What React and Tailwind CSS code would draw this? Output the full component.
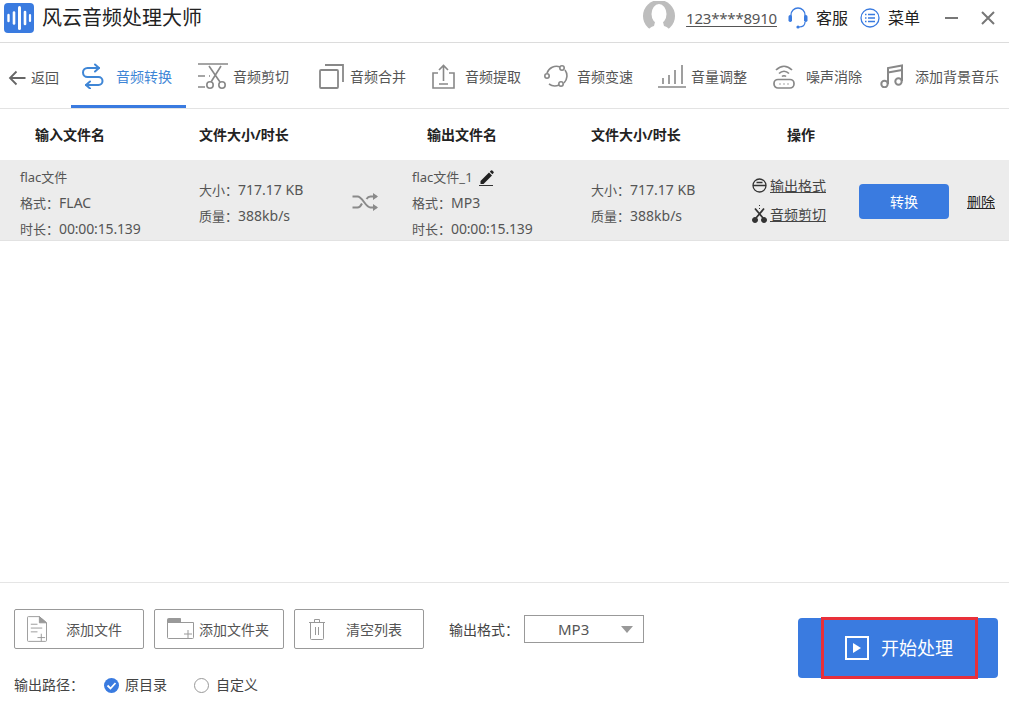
const font = { fontFamily: '"Noto Sans", "Noto Sans CJK SC", sans-serif' };

const Logo = () => (
  <svg width="30" height="30" viewBox="0 0 30 30">
    <rect width="30" height="30" rx="4" fill="#3a7be0" />
    <g stroke="#fff" strokeLinecap="round" fill="none">
      <path d="M4.500 12v6" strokeWidth="2.400" />
      <path d="M10 9.500v11" strokeWidth="2.600" />
      <path d="M15.500 4.500v21" strokeWidth="3" />
      <path d="M21 9v12" strokeWidth="2.600" />
      <path d="M26 12v6" strokeWidth="2.200" />
    </g>
  </svg>
);

const Back = () => (
  <svg width="18" height="16" viewBox="0 0 18 16" fill="none" stroke="#666" strokeWidth="1.800">
    <path d="M17.500 8H2M8.500 1.500 2 8l6.500 6.500" />
  </svg>
);

const ConvertIcon = () => (
  <svg width="24" height="26" viewBox="0 0 24 26" fill="none" stroke="#3f86d6" strokeWidth="2" strokeLinecap="round" strokeLinejoin="round">
    <path d="M14 1.500l4 3.500-4 3.500" />
    <path d="M18 5H6.500a4.500 4.500 0 0 0 0 9H17.500a4 4 0 0 1 0 8H5" />
    <path d="M9 18.500 5 22l4 3.500" />
  </svg>
);

const CutIcon = () => (
  <svg width="30" height="26" viewBox="0 0 30 26" fill="none" stroke="#888" strokeWidth="1.600">
    <path d="M0 1h30M0 13h7M0 24h7M11 13h1" />
    <path d="M11 3l11 16M23 3 13 19" />
    <circle cx="12" cy="22" r="3.200" />
    <circle cx="24" cy="22" r="3.200" />
  </svg>
);

const MergeIcon = () => (
  <svg width="25" height="25" viewBox="0 0 25 25" fill="none" stroke="#888" strokeWidth="1.800">
    <rect x="1" y="6" width="18" height="18" rx="1" />
    <path d="M6 1h18v17" />
  </svg>
);

const ExtractIcon = () => (
  <svg width="23" height="25" viewBox="0 0 23 25" fill="none" stroke="#888" strokeWidth="1.600">
    <path d="M6 9H1v15h21V9h-5" />
    <path d="M11.500 17V2M7 6l4.500-4.500L16 6M7 20h9" />
  </svg>
);

const SpeedIcon = () => (
  <svg width="24" height="24" viewBox="0 0 24 24" fill="none" stroke="#888" strokeWidth="1.600">
    <path d="M3 9a10 10 0 0 1 13-6M21 6a10 10 0 0 1-1 13M15 21a10 10 0 0 1-10-1" />
    <circle cx="18" cy="4" r="2.200" />
    <circle cx="3" cy="12" r="2.200" />
    <circle cx="17" cy="20" r="2.200" />
  </svg>
);

const VolumeIcon = () => (
  <svg width="28" height="24" viewBox="0 0 28 24" fill="none" stroke="#888" strokeWidth="1.600">
    <path d="M0 23h28M5 20v-6M11 20v-9M17 20V6M24 20V1" />
  </svg>
);

const NoiseIcon = () => (
  <svg width="22" height="25" viewBox="0 0 22 25" fill="none" stroke="#888" strokeWidth="1.700">
    <path d="M3 6c5-5 11-5 16 0M6 9.500c3-3 7-3 10 0M9 12.500c1-1 3-1 4 0" />
    <rect x="1" y="15.500" width="20" height="8.500" rx="4" />
    <path d="M6.500 20h1M10.500 20h1M14.500 20h1" />
  </svg>
);

const MusicIcon = () => (
  <svg width="24" height="24" viewBox="0 0 24 24" fill="none" stroke="#888" strokeWidth="2">
    <path d="M8 20V4l14-2.500V17M8 8.500l14-2.500" />
    <circle cx="4.500" cy="20" r="3.200" />
    <circle cx="18.500" cy="17.500" r="3.200" />
  </svg>
);

const Avatar = () => (
  <svg width="32" height="29" viewBox="0 0 32 29">
    <circle cx="16" cy="15" r="16" fill="#bdbdbd" />
    <ellipse cx="16" cy="13" rx="7.500" ry="10" fill="#fff" />
    <path d="M12 21h8l1 4c2 .5 4 1.500 6 4H5c2-2.500 4-3.500 6-4z" fill="#fff" />
  </svg>
);

const Headset = () => (
  <svg width="20" height="22" viewBox="0 0 20 22" fill="none">
    <path d="M3 10V8a7 7 0 0 1 14 0v2" stroke="#3a7be0" strokeWidth="1.300" />
    <rect x="0.500" y="8" width="3.500" height="7" rx="1.700" fill="#3a7be0" />
    <rect x="16" y="8" width="3.500" height="7" rx="1.700" fill="#3a7be0" />
    <path d="M17 15c0 3-2 5-6 5" stroke="#3a7be0" strokeWidth="1.200" />
    <circle cx="10" cy="20" r="1.600" fill="#3a7be0" />
  </svg>
);

const MenuIcon = () => (
  <svg width="20" height="20" viewBox="0 0 20 20" fill="none" stroke="#3a7be0">
    <circle cx="10" cy="10" r="9" strokeWidth="1.300" />
    <path d="M8 6.500h7M8 10h7M8 13.500h7M5 6.500h1.500M5 10h1.500M5 13.500h1.500" strokeWidth="1.300" />
  </svg>
);

const Shuffle = () => (
  <svg width="28" height="18" viewBox="0 0 27 18" fill="none" stroke="#8a8a8a" strokeWidth="2">
    <path d="M0 3.500h5c5 0 8 11 13 11h6M0 14.500h5c2 0 3.500-2 4.500-4M14 6c1-1.500 2.500-2.500 4-2.500h6" />
    <path d="M20.500 0l5 3.500-5 3.500zM20.500 11l5 3.500-5 3.500z" fill="#8a8a8a" stroke="none" />
  </svg>
);

const Pencil = () => (
  <svg width="15" height="16" viewBox="0 0 15 16">
    <path d="M1.500 11 10 2.500l3 3L4.500 14H1.500z" fill="#222" />
    <path d="M10.800 1.700 12 .5a1 1 0 0 1 1.300 0l1.200 1.300a1 1 0 0 1 0 1.300l-1.200 1.200z" fill="#222" />
    <path d="M0 15.500h14" stroke="#333" />
  </svg>
);

const FormatIcon = () => (
  <svg width="15" height="15" viewBox="0 0 15 15" fill="none" stroke="#333" strokeWidth="1.300">
    <circle cx="7.500" cy="7.500" r="6.500" />
    <path d="M1 7.500h13M4.500 4.500h6" />
  </svg>
);

const ScissorIcon = () => (
  <svg width="15" height="18" viewBox="0 0 15 18" fill="none" stroke="#333">
    <path d="M7.500 0v1M7.500 3v1" strokeWidth="1" />
    <path d="M3 3.500 11 13M12 3.500 4 13" strokeWidth="1.800" />
    <circle cx="3" cy="15" r="2.500" fill="#333" />
    <circle cx="12" cy="15" r="2.500" fill="#333" />
  </svg>
);

const AddFileIcon = () => (
  <svg width="20" height="26" viewBox="0 0 21 27" fill="none" stroke="#999">
    <path d="M13 .5H1.500a1 1 0 0 0-1 1v24a1 1 0 0 0 1 1h18a1 1 0 0 0 1-1V7z" />
    <path d="M13 .5 20.500 7H13z" fill="#999" />
    <path d="M4 8.500h7M4 12.500h12M4 16.500h7M11 22.500h8M15 18.500v8" />
  </svg>
);

const AddFolderIcon = () => (
  <svg width="27" height="22" viewBox="0 0 27 22" fill="none" stroke="#999">
    <path d="M.5 4.500h26v15a1 1 0 0 1-1 1h-24a1 1 0 0 1-1-1z" />
    <path d="M.5 4.500v-3a1 1 0 0 1 1-1h12v4z" fill="#999" />
    <path d="M17 16h8M21 12v8" />
  </svg>
);

const TrashIcon = () => (
  <svg width="16" height="21" viewBox="0 0 16 21" fill="none" stroke="#999">
    <path d="M0 3.500h16M5.500 3.500v-3h5v3M1.500 3.500v16a1 1 0 0 0 1 1h11a1 1 0 0 0 1-1v-16M6.500 8v8M9.500 8v8" />
  </svg>
);

const navItems = [
  { label: "音频转换", icon: <ConvertIcon />, active: true, w: "w-[115px]", gap: "gap-[11px]", pl: "pl-[10px]" },
  { label: "音频剪切", icon: <CutIcon />, w: "w-[120px]", gap: "gap-[5px]", pl: "pl-[12px]" },
  { label: "音频合并", icon: <MergeIcon />, w: "w-[113px]", gap: "gap-[6px]", pl: "pl-[13px]" },
  { label: "音频提取", icon: <ExtractIcon />, w: "w-[113px]", gap: "gap-[10px]", pl: "pl-[13px]" },
  { label: "音频变速", icon: <SpeedIcon />, w: "w-[114px]", gap: "gap-[9px]", pl: "pl-[12px]" },
  { label: "音量调整", icon: <VolumeIcon />, w: "w-[114px]", gap: "gap-[5px]", pl: "pl-[12px]" },
  { label: "噪声消除", icon: <NoiseIcon />, w: "w-[107px]", gap: "gap-[11px]", pl: "pl-[13px]" },
  { label: "添加背景音乐", icon: <MusicIcon />, w: "w-[142px]", gap: "gap-[11px]", pl: "pl-[13px]" },
];

const Cols = ({ children, className }) => (
  <div className={`grid grid-cols-[20px_179px_153px_60px_179px_161px_107px_108px_42px] ${className}`}>{children}</div>
);

const Field = ({ label, value, tight }) => (
  <div>
    <span className="text-[13px]">{label}：</span>
    <span className={tight ? "text-[14px] tracking-[-0.15px]" : "text-[14px]"}>{value}</span>
  </div>
);

const ActionButton = ({ icon, label, iconBox }) => (
  <button className={`w-[130px] h-10 flex items-center border border-[#999] rounded-[2px] bg-white text-[14px] text-[#555] whitespace-nowrap ${iconBox}`}>
    {icon}
    {label}
  </button>
);

export default function App() {
  return (
    <div style={font} className="w-[1009px] h-[704px] bg-white flex flex-col overflow-hidden text-[14px] text-[#555]">
      <header className="h-[43px] flex items-center border-b border-[#dcdcdc] shrink-0">
        <div className="ml-1 mb-[6px]"><Logo /></div>
        <h1 className="ml-2 mb-[6px] text-[20px] leading-6 text-[#222]">风云音频处理大师</h1>
        <div className="ml-auto flex items-center mb-[6px]">
          <span className="mb-[6px]"><Avatar /></span>
          <span className="ml-[11px] text-[15px] tracking-[-0.2px] text-[#555] underline underline-offset-2">123****8910</span>
          <span className="ml-[11px]"><Headset /></span>
          <span className="ml-[8px] text-[16px] text-[#222]">客服</span>
          <span className="ml-[12px]"><MenuIcon /></span>
          <span className="ml-[8px] text-[16px] text-[#222]">菜单</span>
          <span className="ml-[25px] w-[13px] h-[2px] bg-[#777]" />
          <svg className="ml-[23px] mr-[14px]" width="14" height="14" viewBox="0 0 14 14" stroke="#777" strokeWidth="2">
            <path d="M1 1l12 12M13 1 1 13" />
          </svg>
        </div>
      </header>

      <nav className="h-[66px] flex items-stretch border-b border-[#e3e3e3] shrink-0">
        <div className="w-[71px] flex items-center gap-[5px] pl-[8px] pt-[4px] text-[#555]">
          <Back />
          <span>返回</span>
        </div>
        {navItems.map((item) => (
          <div
            key={item.label}
            className={`${item.w} ${item.gap} ${item.pl} shrink-0 pt-[4px] flex items-center whitespace-nowrap border-b-[3px] ${item.active ? "border-[#3a7be0] text-[#3f86d6]" : "border-transparent text-[#555]"}`}
          >
            {item.icon}
            <span>{item.label}</span>
          </div>
        ))}
      </nav>

      <Cols className="h-[51px] items-center font-bold text-[#222] shrink-0">
        <span />
        <span className="pl-[15px]">输入文件名</span>
        <span>文件大小/时长</span>
        <span />
        <span className="pl-[15px]">输出文件名</span>
        <span>文件大小/时长</span>
        <span className="pl-[35px]">操作</span>
      </Cols>

      <Cols className="h-[81px] pt-[1px] items-center bg-[#ececec] border-b border-[#e2e2e2] shrink-0 leading-[25px]">
        <span />
        <div className="pt-[4px]">
          <div className="text-[13px]">flac文件</div>
          <Field label="格式" value="FLAC" />
          <Field label="时长" value="00:00:15.139" tight />
        </div>
        <div className="pt-[2px] leading-[26px]">
          <Field label="大小" value="717.17 KB" />
          <Field label="质量" value="388kb/s" />
        </div>
        <Shuffle />
        <div className="pt-[4px]">
          <div className="flex items-center gap-[6px] text-[13px]">flac文件_1 <Pencil /></div>
          <Field label="格式" value="MP3" />
          <Field label="时长" value="00:00:15.139" tight />
        </div>
        <div className="pt-[2px] leading-[26px]">
          <Field label="大小" value="717.17 KB" />
          <Field label="质量" value="388kb/s" />
        </div>
        <div className="flex flex-col gap-[4px] pb-[4px] text-[#444]">
          <div className="flex items-center gap-[3px]"><FormatIcon /><span className="underline">输出格式</span></div>
          <div className="flex items-center gap-[3px]"><ScissorIcon /><span className="underline">音频剪切</span></div>
        </div>
        <button className="w-[90px] h-[35px] rounded-[4px] bg-[#3a7be0] text-white">转换</button>
        <span className="underline text-[#222]">删除</span>
      </Cols>

      <div className="flex-1 border-b border-[#e5e5e5]" />

      <footer className="h-[121px] shrink-0 flex justify-between pl-[14px] pr-[11px] pt-[26px]">
        <div>
          <div className="flex items-center">
            <div className="flex gap-[10px]">
              <ActionButton icon={<AddFileIcon />} label="添加文件" iconBox="pl-[12px] gap-[19px]" />
              <ActionButton icon={<AddFolderIcon />} label="添加文件夹" iconBox="pl-[12px] gap-[5px]" />
              <ActionButton icon={<TrashIcon />} label="清空列表" iconBox="pl-[14px] gap-[21px]" />
            </div>
            <span className="ml-[25px] text-[#444]">输出格式：</span>
            <div className="ml-[5px] w-[120px] h-[28px] border border-[#999] flex items-center justify-between text-[15px] pl-[33px] pr-[10px] text-[#555]">
              MP3
              <span className="w-0 h-0 border-l-[6px] border-r-[6px] border-t-[7px] border-l-transparent border-r-transparent border-t-[#999]" />
            </div>
          </div>
          <div className="mt-[26px] flex items-center leading-[20px] text-[#444]">
            <span>输出路径：</span>
            <svg className="ml-[20px]" width="15" height="15" viewBox="0 0 15 15">
              <circle cx="7.500" cy="7.500" r="7.500" fill="#3a7be0" />
              <path d="M3.500 7.500 6.500 10.500 11.500 5" fill="none" stroke="#fff" strokeWidth="1.800" />
            </svg>
            <span className="ml-[6px]">原目录</span>
            <span className="ml-[27px] w-[15px] h-[15px] rounded-full border border-[#999] bg-white" />
            <span className="ml-[7px]">自定义</span>
          </div>
        </div>
        <div className="relative w-[200px] h-[60px] mt-[9px] rounded-[4px] bg-[#3a7be0] text-white flex items-center justify-center">
          <div className="flex items-center gap-[12px] pl-[47px] w-full">
            <span className="w-[24px] h-[24px] border-2 border-white flex items-center justify-center">
              <span className="w-0 h-0 border-y-[5px] border-l-[8px] border-y-transparent border-l-white" />
            </span>
            <span className="text-[18px]">开始处理</span>
          </div>
          <div className="absolute left-[23px] top-[-1px] w-[157px] h-[62px] border-[3px] border-[#e8303a]" />
        </div>
      </footer>
    </div>
  );
}
